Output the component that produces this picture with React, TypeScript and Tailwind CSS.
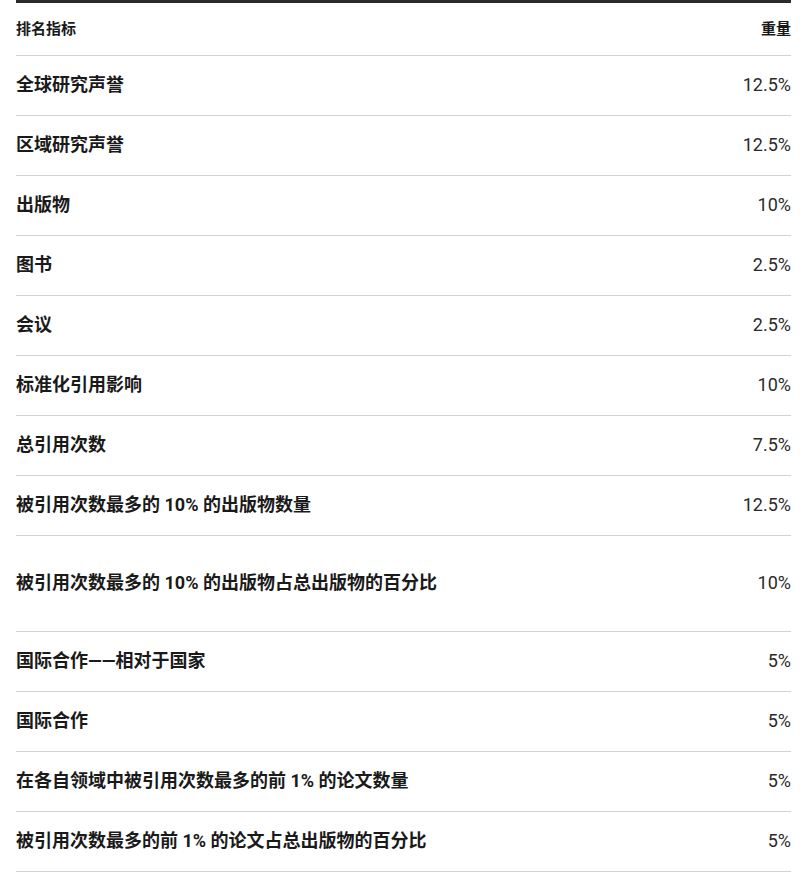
const rows: { label: string; weight: string; tall?: boolean }[] = [
  { label: '全球研究声誉', weight: '12.5%' },
  { label: '区域研究声誉', weight: '12.5%' },
  { label: '出版物', weight: '10%' },
  { label: '图书', weight: '2.5%' },
  { label: '会议', weight: '2.5%' },
  { label: '标准化引用影响', weight: '10%' },
  { label: '总引用次数', weight: '7.5%' },
  { label: '被引用次数最多的 10% 的出版物数量', weight: '12.5%' },
  { label: '被引用次数最多的 10% 的出版物占总出版物的百分比', weight: '10%', tall: true },
  { label: '国际合作——相对于国家', weight: '5%' },
  { label: '国际合作', weight: '5%' },
  { label: '在各自领域中被引用次数最多的前 1% 的论文数量', weight: '5%' },
  { label: '被引用次数最多的前 1% 的论文占总出版物的百分比', weight: '5%' },
];

export default function App() {
  return (
    <div className="min-h-screen bg-white px-4 font-['Roboto','Noto_Sans_CJK_SC',sans-serif]">
      <div className="border-t-[3px] border-[#2b2b2b]">
        {/* 表头 */}
        <div className="flex h-[53px] items-center justify-between border-b border-[#d2d2d2] text-[15px] font-bold text-[#1a1a1a]">
          <span>排名指标</span>
          <span>重量</span>
        </div>

        {rows.map((row) => (
          <div
            key={row.label}
            className={`flex items-center justify-between border-b border-[#d2d2d2] pb-[2px] ${row.tall ? 'h-[96px]' : 'h-[60px]'}`}
          >
            <span className="text-[18px] font-bold text-[#1a1a1a]">{row.label}</span>
            <span className="text-[18px] font-normal text-[#2a2a2a]">{row.weight}</span>
          </div>
        ))}
      </div>
    </div>
  );
}
